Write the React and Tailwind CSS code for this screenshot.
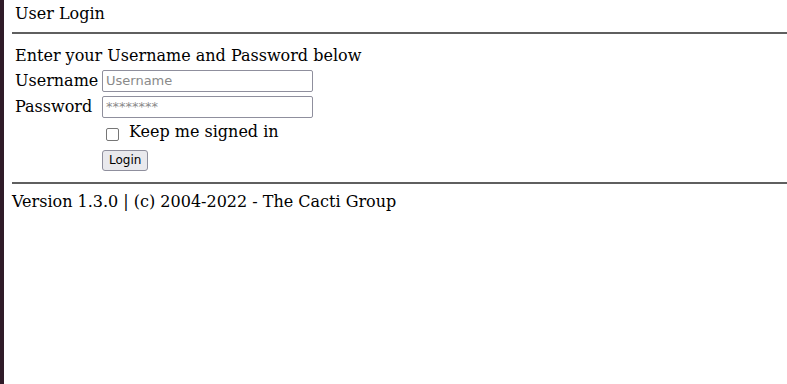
import React from "react";

const App = () => {
    return (
        <div className="flex h-[384px] w-full bg-white font-['DejaVu_Serif',serif] text-[16px] text-black">
            {/* Left strip */}
            <div className="w-[4px] shrink-0 bg-[#2f1b28]" />

            <div className="flex-1">
                {/* Header */}
                <div className="pl-[11px] pt-[4px] h-[32px] leading-[20px]">User Login</div>
                <div className="ml-[8px] h-[2px] bg-[#5f5f5f]" />

                {/* Form */}
                <div className="pl-[11px] pt-[12px]">
                    <div className="leading-[20px]">Enter your Username and Password below</div>
                    <div className="mt-[2px] flex items-center h-[25px]">
                        <span className="w-[87px] leading-[20px]">Username</span>
                        <input
                            type="text"
                            placeholder="Username"
                            className="h-[22px] w-[211px] rounded-[2px] border border-[#8f8f9d] px-[3px] font-['DejaVu_Sans',sans-serif] text-[13px] placeholder:text-[#8a8a8a] outline-none"
                        />
                    </div>
                    <div className="mt-[1px] flex items-center h-[25px]">
                        <span className="w-[87px] leading-[20px]">Password</span>
                        <input
                            type="password"
                            placeholder="********"
                            className="h-[22px] w-[211px] rounded-[2px] border border-[#8f8f9d] px-[3px] font-['DejaVu_Sans',sans-serif] text-[13px] placeholder:text-[#8a8a8a] outline-none"
                        />
                    </div>
                    <div className="flex items-center h-[26px] pl-[91px]">
                        <span className="inline-block h-[13px] w-[13px] rounded-[2px] border border-[#767676] mt-[4px]" />
                        <span className="ml-[10px] leading-[20px]">Keep me signed in</span>
                    </div>
                    <div className="mt-[2px] pl-[87px]">
                        <button className="h-[21px] rounded-[3px] border border-[#8f8f9d] bg-[#e9e9ed] px-[6px] font-['DejaVu_Sans',sans-serif] text-[12px] leading-[19px]">
                            Login
                        </button>
                    </div>
                </div>

                {/* Footer */}
                <div className="mt-[11px] ml-[8px] h-[2px] bg-[#5f5f5f]" />
                <div className="pl-[8px] pt-[8px] leading-[20px]">Version 1.3.0 | (c) 2004-2022 - The Cacti Group</div>
            </div>
        </div>
    );
};

export default App;
